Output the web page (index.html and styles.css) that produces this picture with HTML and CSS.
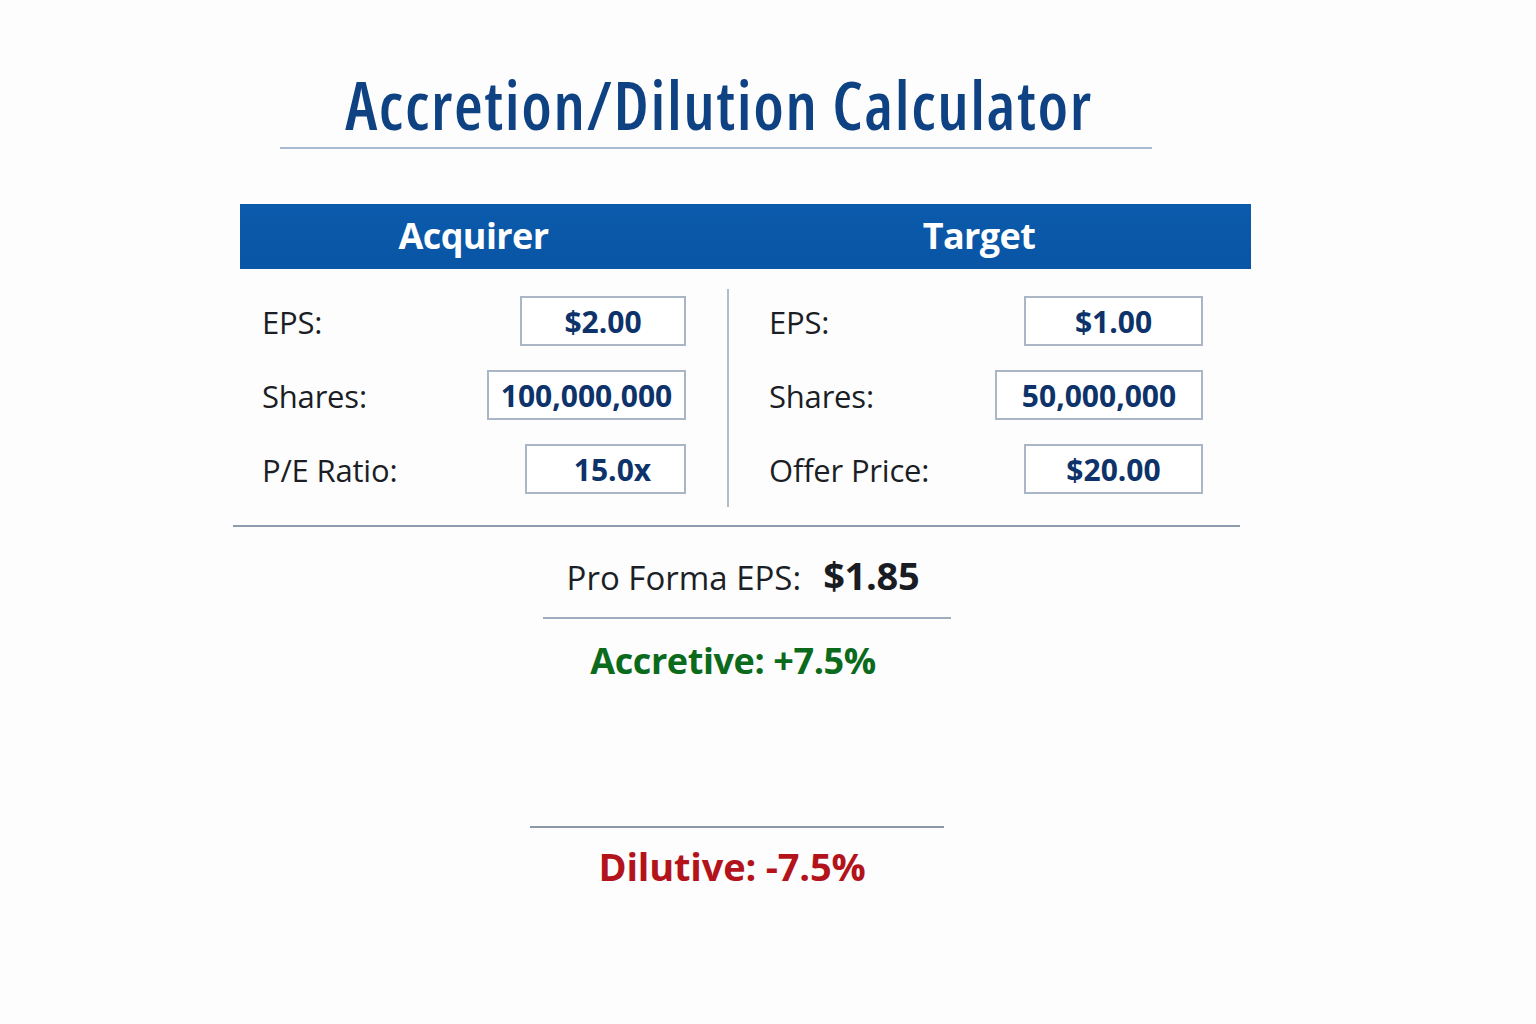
FILE: index.html
```html
<!DOCTYPE html>
<html lang="en">
<head>
<meta charset="utf-8">
<title>Accretion/Dilution Calculator</title>
<link rel="stylesheet" href="styles.css">
</head>
<body>
<main class="page">
  <header class="title-wrap">
    <h1 class="title">Accretion/Dilution Calculator</h1>
  </header>

  <section class="calc">
    <div class="calc-head">
      <div class="head-cell head-left">Acquirer</div>
      <div class="head-cell head-right">Target</div>
    </div>
    <div class="calc-body">
      <div class="panel panel-left">
        <div class="row"><span class="label">EPS:</span><span class="field w166">$2.00</span></div>
        <div class="row"><span class="label">Shares:</span><span class="field w199">100,000,000</span></div>
        <div class="row"><span class="label">P/E Ratio:</span><span class="field w161 shift">15.0x</span></div>
      </div>
      <div class="divider"></div>
      <div class="panel panel-right">
        <div class="row"><span class="label">EPS:</span><span class="field w179">$1.00</span></div>
        <div class="row"><span class="label">Shares:</span><span class="field w208">50,000,000</span></div>
        <div class="row"><span class="label">Offer Price:</span><span class="field w179">$20.00</span></div>
      </div>
    </div>
  </section>

  <div class="main-rule"></div>

  <section class="results">
    <div class="proforma"><span class="pf-label">Pro Forma EPS:</span><span class="pf-value">$1.85</span></div>
    <div class="rule rule-a"></div>
    <div class="outcome accretive">Accretive: +7.5%</div>
    <div class="rule rule-b"></div>
    <div class="outcome dilutive">Dilutive: -7.5%</div>
  </section>
</main>
</body>
</html>
```

FILE: styles.css
```css
html, body {
  margin: 0;
  padding: 0;
  background: #fdfdfd;
}

body {
  font-family: "Open Sans", Lato, "DejaVu Sans", sans-serif;
  color: #1c1f26;
}

.page {
  width: 1536px;
  height: 1024px;
  padding-top: 62px;
  box-sizing: border-box;
}

.title-wrap {
  width: 872px;
  margin-left: 280px;
  border-bottom: 2px solid #a7bad2;
  text-align: center;
}

.title {
  margin: 0;
  padding-left: 6px;
  font-size: 66px;
  line-height: 85px;
  font-weight: 600;
  font-stretch: 75%;
  letter-spacing: 1.6px;
  color: #0e4283;
}

.calc {
  width: 1011px;
  margin-left: 240px;
  margin-top: 55px;
}

.calc-head {
  display: grid;
  grid-template-columns: 487px 1fr;
  height: 65px;
  background: linear-gradient(180deg, #0b5aab 0%, #0a55a5 100%);
  color: #ffffff;
  font-weight: 700;
  font-size: 36px;
  letter-spacing: -0.6px;
}

.head-cell {
  display: flex;
  align-items: center;
  justify-content: center;
  padding-bottom: 2px;
}

.head-left { padding-right: 20px; }
.head-right { padding-right: 20px; }

.calc-body {
  display: grid;
  grid-template-columns: 487px 2px 1fr;
  margin-top: 20px;
}

.divider {
  background: #b2bccb;
  height: 218px;
}

.panel {
  display: flex;
  flex-direction: column;
  gap: 24px;
  padding-top: 7px;
}

.panel-left { padding-left: 22px; padding-right: 41px; }
.panel-right { padding-left: 40px; padding-right: 48px; }

.row {
  display: flex;
  align-items: center;
  justify-content: space-between;
  height: 50px;
}

.label {
  font-size: 31px;
  font-weight: 500;
  color: #1b1e25;
  letter-spacing: -0.2px;
  padding-top: 2px;
}

.field {
  box-sizing: border-box;
  height: 50px;
  border: 2px solid #aab6c5;
  background: #ffffff;
  display: flex;
  align-items: center;
  justify-content: center;
  font-size: 30px;
  font-weight: 700;
  color: #0d336a;
  padding-top: 1px;
}

.shift { padding-left: 14px; }

.w161 { width: 161px; }
.w166 { width: 166px; }
.w179 { width: 179px; }
.w199 { width: 199px; }
.w208 { width: 208px; }

.main-rule {
  width: 1007px;
  height: 2px;
  margin-left: 233px;
  margin-top: 18px;
  background: #8f9bae;
}

.results {
  display: flex;
  flex-direction: column;
}

.proforma {
  width: 420px;
  margin-left: 533px;
  margin-top: 22px;
  display: flex;
  justify-content: center;
  align-items: baseline;
  gap: 22px;
  height: 52px;
}

.pf-label {
  font-size: 33px;
  font-weight: 500;
  color: #1c1f26;
}

.pf-value {
  font-size: 38px;
  font-weight: 700;
  color: #191c22;
  letter-spacing: -0.3px;
}

.rule {
  height: 2px;
  background: #a0adbf;
}

.rule-a {
  width: 408px;
  margin-left: 543px;
  margin-top: 16px;
}

.rule-b {
  width: 414px;
  margin-left: 530px;
  margin-top: 139px;
  background: #8c97a8;
}

.outcome {
  font-weight: 700;
  text-align: center;
}

.accretive {
  width: 420px;
  margin-left: 523px;
  margin-top: 16px;
  height: 52px;
  line-height: 52px;
  font-size: 36px;
  letter-spacing: -0.4px;
  color: #0b6a1b;
}

.dilutive {
  width: 420px;
  margin-left: 522px;
  margin-top: 12px;
  height: 52px;
  line-height: 52px;
  font-size: 38px;
  letter-spacing: -0.2px;
  color: #b3141c;
}
```
